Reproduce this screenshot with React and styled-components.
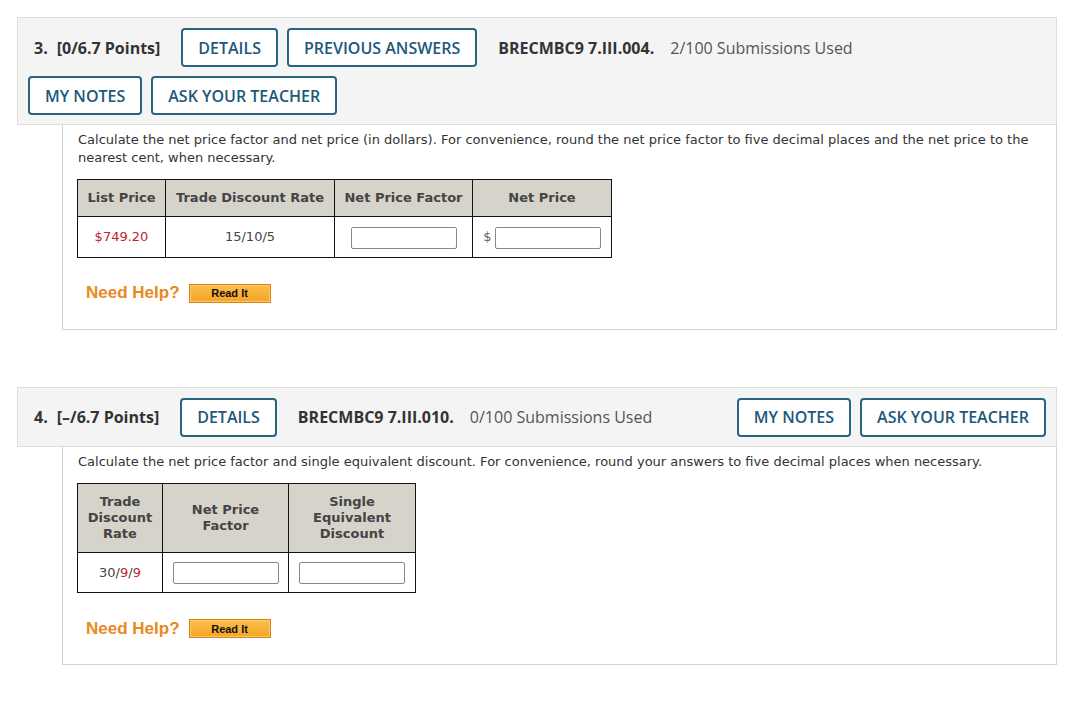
import React from 'react'
import styled, { createGlobalStyle } from 'styled-components'

const GlobalStyle = createGlobalStyle`
  body {
    margin: 0;
    background: #fff;
    font-family: "Open Sans", "DejaVu Sans", sans-serif;
  }
`

const Page = styled.div`
  display: flex;
  flex-direction: column;
  gap: 57px;
  padding: 17px 14px 40px 17px;
`

const Question = styled.div`
  display: flex;
  flex-direction: column;
`

const Header = styled.div`
  display: flex;
  flex-wrap: wrap;
  justify-content: space-between;
  align-items: center;
  row-gap: 9px;
  column-gap: 20px;
  padding: 10px 10px 9px 10px;
  background: #f4f4f4;
  border: 1px solid #dedede;
`

const HeaderGroup = styled.div`
  display: flex;
  align-items: center;
  gap: 9px;
`

const Title = styled.div`
  margin-left: 6px;
  margin-right: 12px;
  font-size: 16px;
  font-weight: 700;
  color: #333;
  white-space: nowrap;
  span {
    margin-left: 9px;
  }
`

const Button = styled.button`
  height: 39px;
  padding: 0 15px;
  font-family: "Open Sans", sans-serif;
  font-size: 16px;
  font-weight: 600;
  color: #21587a;
  background: #fff;
  border: 2px solid #296582;
  border-radius: 4px;
  white-space: nowrap;
  cursor: pointer;
`

const Code = styled.div`
  margin-left: 12px;
  font-size: 16px;
  color: #555;
  white-space: nowrap;
  b {
    color: #333;
    margin-right: 16px;
  }
`

const Body = styled.div`
  margin-left: 45px;
  padding: 6px 15px 26px 15px;
  border: 1px solid #d2d2d2;
  border-top: none;
  font-family: "DejaVu Sans", Verdana, sans-serif;
  font-size: 13px;
  line-height: 18px;
  color: #333;
`

const Prompt = styled.p`
  margin: 0 0 12px 0;
`

const Table = styled.table`
  width: ${p => p.$w}px;
  table-layout: fixed;
  border-collapse: collapse;
  margin-left: -1px;
  text-align: center;
`

const Th = styled.th`
  width: ${p => p.$w}px;
  box-sizing: border-box;
  padding: 10px 6px;
  background: #d6d3cb;
  border: 1px solid #111;
  font-weight: 700;
  line-height: 16px;
  color: #444;
`

const Td = styled.td`
  padding: 9px 8px 8px 8px;
  border: 1px solid #111;
  color: #444;
  line-height: 22px;
  white-space: nowrap;
`

const Red = styled.span`
  color: #c0252b;
`

const Dollar = styled.span`
  color: #666;
  margin-right: 3px;
`

const Input = styled.input`
  width: 106px;
  height: 22px;
  box-sizing: border-box;
  border: 1px solid #888;
  border-radius: 2px;
  vertical-align: middle;
`

const Help = styled.div`
  display: flex;
  align-items: center;
  gap: 9px;
  margin: 26px 0 0 8px;
`

const HelpLabel = styled.span`
  font-family: "Liberation Sans", Arial, sans-serif;
  font-size: 17px;
  font-weight: 700;
  color: #e8891d;
`

const ReadIt = styled.button`
  width: 82px;
  height: 19px;
  padding: 0;
  font-family: "Liberation Sans", Arial, sans-serif;
  font-size: 11px;
  font-weight: 700;
  color: #111;
  background: linear-gradient(#fbbf4e, #f5a425);
  border: 1px solid #d48319;
  box-shadow: inset 0 0 0 1px #fcc766;
  cursor: pointer;
`

const HelpRow = () => (
  <Help>
    <HelpLabel>Need Help?</HelpLabel>
    <ReadIt>Read It</ReadIt>
  </Help>
)

export default function App() {
  return (
    <>
      <GlobalStyle />
      <Page>
        <Question>
          <Header>
            <HeaderGroup>
              <Title>3.<span>[0/6.7 Points]</span></Title>
              <Button>DETAILS</Button>
              <Button>PREVIOUS ANSWERS</Button>
              <Code><b>BRECMBC9 7.III.004.</b>2/100 Submissions Used</Code>
            </HeaderGroup>
            <HeaderGroup>
              <Button>MY NOTES</Button>
              <Button>ASK YOUR TEACHER</Button>
            </HeaderGroup>
          </Header>
          <Body>
            <Prompt>
              Calculate the net price factor and net price (in dollars). For convenience, round the net price factor to five decimal places and the net price to the nearest cent, when necessary.
            </Prompt>
            <Table $w={535}>
              <thead>
                <tr>
                  <Th $w={88}>List Price</Th>
                  <Th $w={169}>Trade Discount Rate</Th>
                  <Th $w={138}>Net Price Factor</Th>
                  <Th $w={139}>Net Price</Th>
                </tr>
              </thead>
              <tbody>
                <tr>
                  <Td><Red>$749.20</Red></Td>
                  <Td>15/10/5</Td>
                  <Td><Input /></Td>
                  <Td><Dollar>$</Dollar><Input /></Td>
                </tr>
              </tbody>
            </Table>
            <HelpRow />
          </Body>
        </Question>

        <Question>
          <Header>
            <HeaderGroup>
              <Title>4.<span>[&ndash;/6.7 Points]</span></Title>
              <Button>DETAILS</Button>
              <Code><b>BRECMBC9 7.III.010.</b>0/100 Submissions Used</Code>
            </HeaderGroup>
            <HeaderGroup>
              <Button>MY NOTES</Button>
              <Button>ASK YOUR TEACHER</Button>
            </HeaderGroup>
          </Header>
          <Body>
            <Prompt>
              Calculate the net price factor and single equivalent discount. For convenience, round your answers to five decimal places when necessary.
            </Prompt>
            <Table $w={339}>
              <thead>
                <tr>
                  <Th $w={85}>Trade Discount Rate</Th>
                  <Th $w={126}>Net Price Factor</Th>
                  <Th $w={127}>Single Equivalent Discount</Th>
                </tr>
              </thead>
              <tbody>
                <tr>
                  <Td>30/<Red>9</Red>/<Red>9</Red></Td>
                  <Td><Input /></Td>
                  <Td><Input /></Td>
                </tr>
              </tbody>
            </Table>
            <HelpRow />
          </Body>
        </Question>
      </Page>
    </>
  )
}
